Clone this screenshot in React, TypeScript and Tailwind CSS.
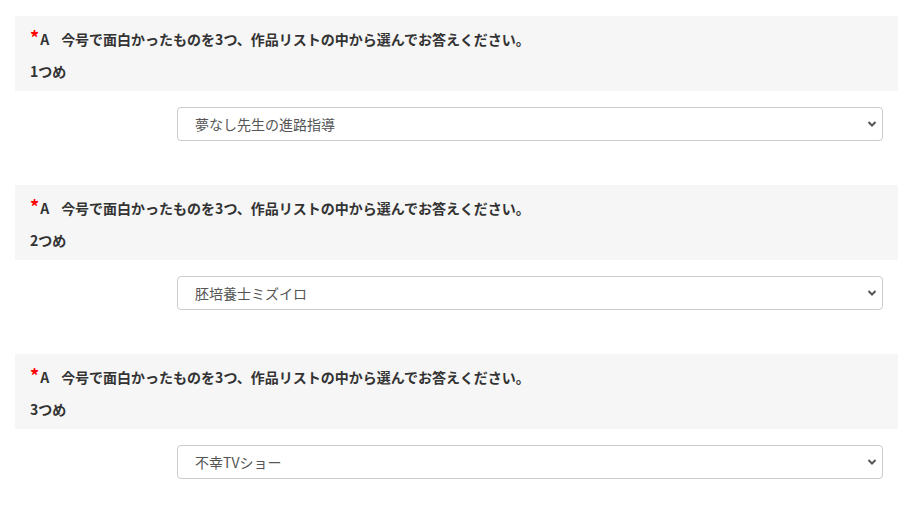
import React, { useState } from 'react';

const options = ['夢なし先生の進路指導', '胚培養士ミズイロ', '不幸TVショー'];

const Question: React.FC<{ no: number; initial: string }> = ({ no, initial }) => {
  const [value, setValue] = useState(initial);

  return (
    <div className="mb-[44px]">
      <div className="bg-[#f6f6f6] h-[75px] px-[15px] pt-[13px]">
        <p className="text-[14px] font-bold text-[#333] leading-[20px] flex items-start">
          <span className="text-[#ff0000] text-[18px] leading-[14px] mt-[1px] mr-[1px]">*</span>
          <span>A</span>
          <span className="ml-[12px]">今号で面白かったものを3つ、作品リストの中から選んでお答えください。</span>
        </p>
        <p className="text-[14px] font-bold text-[#333] leading-[20px] mt-[12px]">{no}つめ</p>
      </div>
      <div className="pl-[162px] pr-[15px] mt-[16px]">
        <div className="relative">
          <select
            className="w-full h-[34px] appearance-none bg-white border border-[#cccccc] rounded-[4px] pl-[17px] pr-8 text-[14px] text-[#555] outline-none"
            value={value}
            onChange={(e) => setValue(e.target.value)}
          >
            {options.map((o) => (
              <option key={o} value={o}>{o}</option>
            ))}
          </select>
          <svg
            className="absolute right-[6px] top-[13px] pointer-events-none"
            width="10"
            height="8"
            viewBox="0 0 10 8"
          >
            <path d="M1.5 2 L5 5.5 L8.5 2" fill="none" stroke="#555" strokeWidth="2" />
          </svg>
        </div>
      </div>
    </div>
  );
};

const App: React.FC = () => {
  return (
    <div
      className="w-[920px] min-h-[511px] bg-white pt-[16px] pl-[15px] pr-[22px]"
      style={{ fontFamily: '"Noto Sans CJK JP", "Liberation Sans", sans-serif' }}
    >
      <Question no={1} initial={options[0]} />
      <Question no={2} initial={options[1]} />
      <Question no={3} initial={options[2]} />
    </div>
  );
};

export default App;
